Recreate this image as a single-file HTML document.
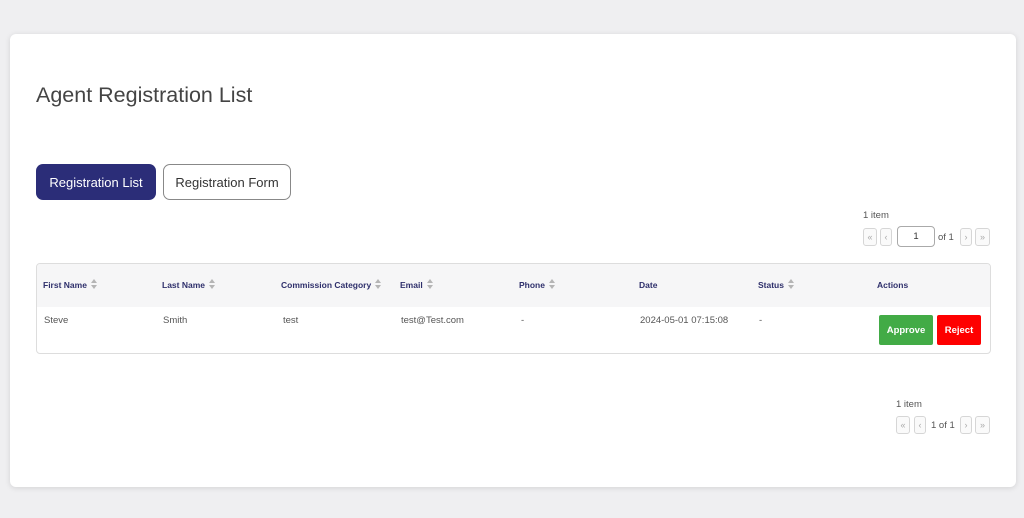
<!DOCTYPE html>
<html><head><style>
*{margin:0;padding:0;box-sizing:border-box}
body{width:1024px;height:518px;background:#efeff1;font-family:"Liberation Sans",sans-serif;position:relative;overflow:hidden}
.card{position:absolute;left:10px;top:34px;width:1006px;height:453px;background:#fff;border-radius:6px;box-shadow:0 1px 6px rgba(0,0,0,.12)}
.a{position:absolute;white-space:nowrap}
h1{position:absolute;left:36px;top:83px;font-size:21.5px;font-weight:normal;color:#444;letter-spacing:0}
.btn{position:absolute;top:164px;height:36px;border-radius:7px;font-size:13px;display:flex;align-items:center;justify-content:center}
.pb{position:absolute;height:18px;border:1px solid #d6d6d6;border-radius:3px;color:#aaa;font-size:9px;display:flex;align-items:center;justify-content:center;background:#fafafa}
.tbl{position:absolute;left:36px;top:263px;width:955px;height:91px;border:1px solid #ddd;border-radius:4px;overflow:hidden}
.hd{position:absolute;left:0;top:0;width:100%;height:43px;background:#f6f6f7}
.th{position:absolute;top:16px;font-size:8.5px;font-weight:bold;color:#2e2f6b}
.td{position:absolute;top:51px;font-size:9.5px;color:#555}
.s{display:inline-block;vertical-align:middle;margin-left:4px;width:7px;height:11px;position:relative;top:-1px}
.s:before{content:"";position:absolute;left:0;top:0;border:3.5px solid transparent;border-bottom:4px solid #b5b5b5;border-top:0}
.s:after{content:"";position:absolute;left:0;top:6px;border:3.5px solid transparent;border-top:4px solid #b5b5b5;border-bottom:0}
</style></head><body>
<div class="card"></div>
<h1>Agent Registration List</h1>
<div class="btn" style="left:36px;width:120px;background:#2b2d78;color:#fff">Registration List</div>
<div class="btn" style="left:163px;width:128px;border:1px solid #888;color:#333;background:#fff">Registration Form</div>

<div class="a" style="left:863px;top:210px;font-size:9.5px;color:#555">1 item</div>
<div class="pb" style="left:863px;top:228px;width:14px">«</div>
<div class="pb" style="left:880px;top:228px;width:12px">‹</div>
<div class="a" style="left:897px;top:226px;width:38px;height:21px;border:1px solid #aaa;border-radius:4px;font-size:9.5px;color:#333;text-align:center;line-height:19px">1</div>
<div class="a" style="left:938px;top:232px;font-size:9.5px;color:#555">of 1</div>
<div class="pb" style="left:960px;top:228px;width:12px">›</div>
<div class="pb" style="left:975px;top:228px;width:15px">»</div>

<div class="tbl">
<div class="hd"></div>
<div class="th" style="left:6px">First Name<span class="s"></span></div>
<div class="th" style="left:125px">Last Name<span class="s"></span></div>
<div class="th" style="left:244px">Commission Category<span class="s"></span></div>
<div class="th" style="left:363px">Email<span class="s"></span></div>
<div class="th" style="left:482px">Phone<span class="s"></span></div>
<div class="th" style="left:602px">Date</div>
<div class="th" style="left:721px">Status<span class="s"></span></div>
<div class="th" style="left:840px">Actions</div>
<div class="td" style="left:7px">Steve</div>
<div class="td" style="left:126px">Smith</div>
<div class="td" style="left:246px">test</div>
<div class="td" style="left:364px">test@Test.com</div>
<div class="td" style="left:484px">-</div>
<div class="td" style="left:603px">2024-05-01 07:15:08</div>
<div class="td" style="left:722px">-</div>
<div class="a" style="left:842px;top:51px;width:54px;height:30px;background:#42ab46;color:#fff;font-size:9.5px;font-weight:bold;border-radius:2px;display:flex;align-items:center;justify-content:center">Approve</div>
<div class="a" style="left:900px;top:51px;width:44px;height:30px;background:#fe0000;color:#fff;font-size:9.5px;font-weight:bold;border-radius:2px;display:flex;align-items:center;justify-content:center">Reject</div>
</div>

<div class="a" style="left:896px;top:399px;font-size:9.5px;color:#555">1 item</div>
<div class="pb" style="left:896px;top:416px;width:14px">«</div>
<div class="pb" style="left:914px;top:416px;width:12px">‹</div>
<div class="a" style="left:931px;top:420px;font-size:9.5px;color:#555">1 of 1</div>
<div class="pb" style="left:960px;top:416px;width:12px">›</div>
<div class="pb" style="left:975px;top:416px;width:15px">»</div>
</body></html>
